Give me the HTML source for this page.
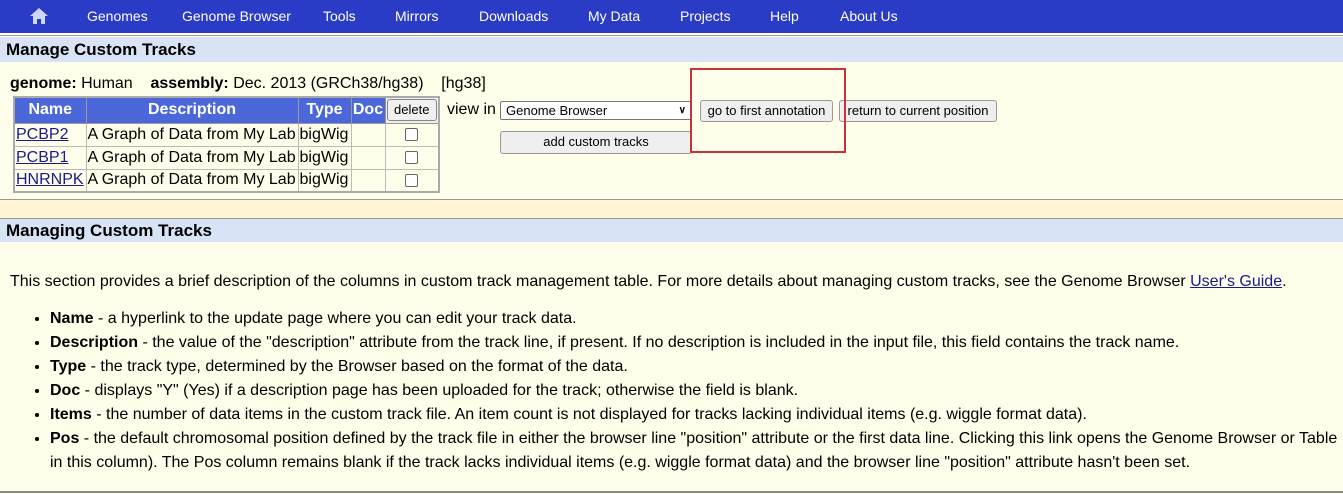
<!DOCTYPE html>
<html><head><style>
*{margin:0;padding:0;box-sizing:border-box}
body{width:1343px;height:494px;overflow:hidden;background:#fffeea;font-family:"Liberation Sans",Arial,sans-serif;color:#000;position:relative;font-size:16px}
.a{position:absolute;white-space:nowrap}
#nav{position:absolute;left:0;top:0;width:1343px;height:33px;background:#2a3bc6}
#nav span{position:absolute;top:8px;color:#fff;font-size:14px}
.bar{position:absolute;left:0;width:1343px;background:#d8e3f6;font-weight:bold;font-size:17px;padding-left:6px}
table{position:absolute;left:13px;top:96px;border-collapse:collapse;table-layout:fixed;width:427px;background:#fffeea;border:2px solid #aaa}
td,th{border:1px solid #bbb;height:23px;font-size:16px;padding:0 1px;white-space:nowrap;overflow:hidden}
th{background:#4b67d9;color:#fff;font-weight:bold;font-size:16px;height:26px;border:1px solid #999}
td a{color:#1a1a8c}
.cb{display:inline-block;width:13px;height:13px;border:1px solid #666;border-radius:2px;background:#fff;vertical-align:middle}
.btn{position:absolute;background:#efefef;border:1px solid #999;border-radius:3px;font-size:13px;text-align:center;line-height:20px}
ul{position:absolute;left:50px;top:307px;width:1290px;list-style:disc;font-size:16px;line-height:24px}
</style></head><body>
<div id="nav">
<svg class="a" style="left:29px;top:7px" width="20" height="18" viewBox="0 0 20 18"><path d="M10 1 L1 9 H4 V17 H8 V12 H12 V17 H16 V9 H19 Z" fill="#cfd6ff"/></svg>
<span style="left:87px">Genomes</span><span style="left:182px">Genome Browser</span><span style="left:323px">Tools</span><span style="left:395px">Mirrors</span><span style="left:479px">Downloads</span><span style="left:588px">My Data</span><span style="left:680px">Projects</span><span style="left:770px">Help</span><span style="left:840px">About Us</span>
</div>
<div class="a" style="left:0;top:35px;width:1343px;height:1px;background:#999"></div>
<div class="bar" style="top:37px;height:25px;line-height:25px">Manage Custom Tracks</div>
<div class="a" style="left:10px;top:75px"><b>genome:</b> Human &nbsp;&nbsp; <b>assembly:</b> Dec. 2013 (GRCh38/hg38) &nbsp;&nbsp; [hg38]</div>
<table>
<colgroup><col style="width:72px"><col style="width:212px"><col style="width:53px"><col style="width:34px"><col style="width:54px"></colgroup>
<tr><th>Name</th><th>Description</th><th>Type</th><th>Doc</th><th style="background:#eee;padding:1px"><div style="border:1px solid #888;border-radius:3px;font-weight:normal;color:#000;font-size:13px;line-height:20px;background:#f0f0f0;text-align:center">delete</div></th></tr>
<tr><td><a href="#">PCBP2</a></td><td>A Graph of Data from My Lab</td><td>bigWig</td><td></td><td style="text-align:center"><span class="cb"></span></td></tr>
<tr><td><a href="#">PCBP1</a></td><td>A Graph of Data from My Lab</td><td>bigWig</td><td></td><td style="text-align:center"><span class="cb"></span></td></tr>
<tr><td><a href="#">HNRNPK</a></td><td>A Graph of Data from My Lab</td><td>bigWig</td><td></td><td style="text-align:center"><span class="cb"></span></td></tr>
</table>
<div class="a" style="left:447px;top:101px">view in</div>
<div class="a" style="left:500px;top:101px;width:192px;height:19px;border:1px solid #777;border-radius:2px;background:#fff;font-size:13px;line-height:17px;padding-left:5px">Genome Browser<span style="position:absolute;right:5px;font-size:10px;font-weight:bold">&#x2228;</span></div>
<div class="btn" style="left:700px;top:100px;width:133px;height:22px">go to first annotation</div>
<div class="btn" style="left:839px;top:100px;width:158px;height:22px">return to current position</div>
<div class="btn" style="left:500px;top:131px;width:192px;height:23px">add custom tracks</div>
<div class="a" style="left:690px;top:68px;width:156px;height:85px;border:2px solid #c8333a"></div>
<div class="a" style="left:0;top:199px;width:1343px;height:20px;background:#fff5d2;border-top:1px solid #999;border-bottom:1px solid #999"></div>
<div class="bar" style="top:219px;height:23px;line-height:23px">Managing Custom Tracks</div>
<div class="a" style="left:10px;top:273px">This section provides a brief description of the columns in custom track management table. For more details about managing custom tracks, see the Genome Browser <a href="#" style="color:#1a1a8c">User's Guide</a>.</div>
<ul>
<li><b>Name</b> - a hyperlink to the update page where you can edit your track data.</li>
<li><b>Description</b> - the value of the "description" attribute from the track line, if present. If no description is included in the input file, this field contains the track name.</li>
<li><b>Type</b> - the track type, determined by the Browser based on the format of the data.</li>
<li><b>Doc</b> - displays "Y" (Yes) if a description page has been uploaded for the track; otherwise the field is blank.</li>
<li><b>Items</b> - the number of data items in the custom track file. An item count is not displayed for tracks lacking individual items (e.g. wiggle format data).</li>
<li><b>Pos</b> - the default chromosomal position defined by the track file in either the browser line "position" attribute or the first data line. Clicking this link opens the Genome Browser or Table<br>in this column). The Pos column remains blank if the track lacks individual items (e.g. wiggle format data) and the browser line "position" attribute hasn't been set.</li>
</ul>
<div class="a" style="left:0;top:491px;width:1343px;height:2px;background:#888"></div>
</body></html>
